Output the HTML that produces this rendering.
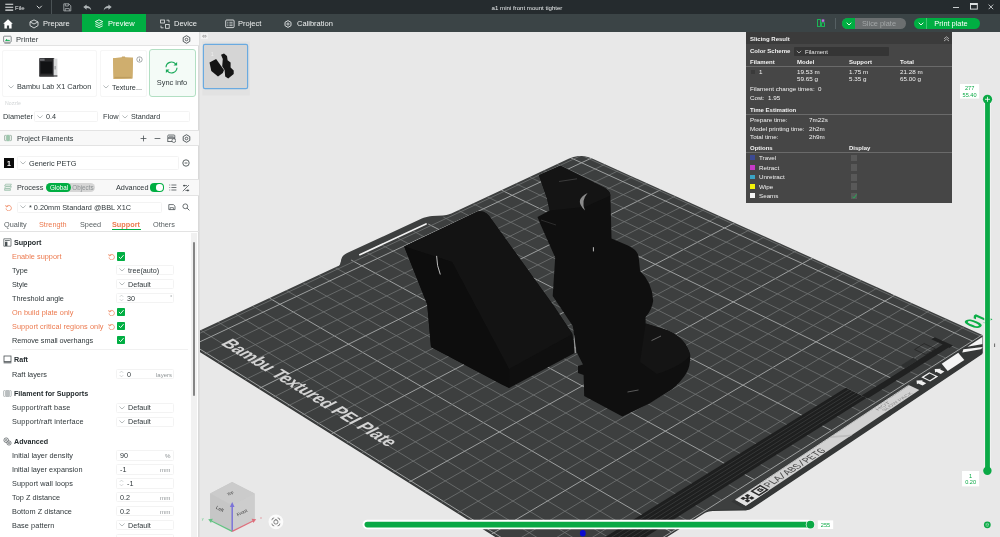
<!DOCTYPE html>
<html><head><meta charset="utf-8"><title>a1 mini front mount tighter</title>
<style>
html,body{margin:0;padding:0;}
body{width:1000px;height:537px;overflow:hidden;position:relative;background:#e8e8e8;font-family:"Liberation Sans",sans-serif;}
.t{position:absolute;white-space:nowrap;will-change:transform;}
.b{position:absolute;box-sizing:border-box;}
#side{position:absolute;left:0;top:32px;width:198px;height:505px;background:#fff;overflow:hidden;}
</style></head><body>

<svg class="b" style="left:0;top:0;will-change:transform" width="1000" height="537" viewBox="0 0 1000 537" font-family="Liberation Sans, sans-serif">
<defs><clipPath id="cp"><path id="plateTop" d="M188.1 335.9L185.8 337.2L184.4 338.5L184.0 339.8L184.6 341.2L186.2 342.5L576.3 586.7L578.5 587.8L580.7 588.3L582.9 588.3L585.1 587.8L587.3 586.6L704.4 512.3L705.8 511.5L707.3 510.9L709.0 510.5L710.8 510.2L712.7 510.1L743.9 509.5L745.8 509.4L747.6 509.1L749.2 508.7L750.7 508.1L752.1 507.3L982.4 353.1L982.4 335.0L592.8 158.7L588.0 156.9L583.1 156.1L578.3 156.1L573.4 157.0L568.6 158.8L451.4 213.4L449.9 214.0L448.3 214.5L446.5 214.9L444.7 215.2L442.8 215.4L432.3 216.1L430.0 216.3L427.7 216.7L425.7 217.2L423.7 217.8L421.8 218.6L347.1 253.1L345.4 254.0L344.0 255.0L342.9 256.0L342.1 257.2L341.6 258.4L340.3 263.7L340.1 264.3L339.7 264.8L339.2 265.4L338.4 265.9L337.6 266.3Z"/></clipPath></defs>
<path d="M188.1 336.9L185.8 338.2L184.4 339.5L184.0 340.8L184.6 342.2L186.2 343.5L576.3 587.7L578.5 588.8L580.7 589.3L582.9 589.3L585.1 588.8L587.3 587.6L704.4 513.3L705.8 512.5L707.3 511.9L709.0 511.5L710.8 511.2L712.7 511.1L743.9 510.5L745.8 510.4L747.6 510.1L749.2 509.7L750.7 509.1L752.1 508.3L982.4 354.1L982.4 336.0L592.8 159.7L588.0 157.9L583.1 157.1L578.3 157.1L573.4 158.0L568.6 159.8L451.4 214.4L449.9 215.0L448.3 215.5L446.5 215.9L444.7 216.2L442.8 216.4L432.3 217.1L430.0 217.3L427.7 217.7L425.7 218.2L423.7 218.8L421.8 219.6L347.1 254.1L345.4 255.0L344.0 256.0L342.9 257.0L342.1 258.2L341.6 259.4L340.3 264.7L340.1 265.3L339.7 265.8L339.2 266.4L338.4 266.9L337.6 267.3Z" fill="#333535"/>
<use href="#plateTop" fill="#3d3f3f"/>
<path d="M359.8 254.7 L426.0 223.9" stroke="#f2f2f2" stroke-width="1.7" stroke-linecap="round"/>
<g clip-path="url(#cp)" fill="none"><path d="M182.8 338.4L582.7 588.4" stroke="#a2a4a4" stroke-width="0.95"/><path d="M579.0 590.7L983.0 334.4" stroke="#a2a4a4" stroke-width="0.95"/><path d="M200.5 330.1L600.9 576.8" stroke="#747777" stroke-width="0.75"/><path d="M560.7 579.3L965.1 326.3" stroke="#747777" stroke-width="0.75"/><path d="M218.0 322.0L618.9 565.4" stroke="#747777" stroke-width="0.75"/><path d="M542.7 568.0L947.4 318.3" stroke="#747777" stroke-width="0.75"/><path d="M235.4 313.9L636.6 554.2" stroke="#747777" stroke-width="0.75"/><path d="M524.9 556.8L929.9 310.4" stroke="#747777" stroke-width="0.75"/><path d="M252.5 305.9L654.1 543.1" stroke="#747777" stroke-width="0.75"/><path d="M507.4 545.8L912.6 302.6" stroke="#747777" stroke-width="0.75"/><path d="M269.4 298.1L671.4 532.1" stroke="#a2a4a4" stroke-width="0.95"/><path d="M490.1 535.0L895.5 294.8" stroke="#a2a4a4" stroke-width="0.95"/><path d="M286.1 290.3L688.4 521.4" stroke="#747777" stroke-width="0.75"/><path d="M473.1 524.3L878.6 287.2" stroke="#747777" stroke-width="0.75"/><path d="M302.7 282.6L705.2 510.7" stroke="#747777" stroke-width="0.75"/><path d="M456.3 513.8L861.9 279.7" stroke="#747777" stroke-width="0.75"/><path d="M319.0 275.0L721.7 500.2" stroke="#747777" stroke-width="0.75"/><path d="M439.8 503.4L845.4 272.2" stroke="#747777" stroke-width="0.75"/><path d="M335.1 267.5L738.0 489.8" stroke="#747777" stroke-width="0.75"/><path d="M423.4 493.2L829.2 264.8" stroke="#747777" stroke-width="0.75"/><path d="M351.1 260.0L754.2 479.6" stroke="#a2a4a4" stroke-width="0.95"/><path d="M407.3 483.1L813.1 257.6" stroke="#a2a4a4" stroke-width="0.95"/><path d="M366.9 252.7L770.1 469.5" stroke="#747777" stroke-width="0.75"/><path d="M391.4 473.1L797.1 250.4" stroke="#747777" stroke-width="0.75"/><path d="M382.5 245.4L785.8 459.6" stroke="#747777" stroke-width="0.75"/><path d="M375.8 463.3L781.4 243.3" stroke="#747777" stroke-width="0.75"/><path d="M398.0 238.2L801.2 449.8" stroke="#747777" stroke-width="0.75"/><path d="M360.3 453.6L765.9 236.2" stroke="#747777" stroke-width="0.75"/><path d="M413.2 231.1L816.5 440.1" stroke="#747777" stroke-width="0.75"/><path d="M345.0 444.0L750.5 229.3" stroke="#747777" stroke-width="0.75"/><path d="M428.3 224.1L831.6 430.5" stroke="#a2a4a4" stroke-width="0.95"/><path d="M330.0 434.6L735.3 222.4" stroke="#a2a4a4" stroke-width="0.95"/><path d="M443.3 217.1L846.5 421.0" stroke="#747777" stroke-width="0.75"/><path d="M315.1 425.3L720.3 215.6" stroke="#747777" stroke-width="0.75"/><path d="M458.1 210.3L861.2 411.7" stroke="#747777" stroke-width="0.75"/><path d="M300.5 416.1L705.4 208.9" stroke="#747777" stroke-width="0.75"/><path d="M472.7 203.5L875.7 402.5" stroke="#747777" stroke-width="0.75"/><path d="M286.0 407.0L690.7 202.2" stroke="#747777" stroke-width="0.75"/><path d="M487.1 196.7L890.1 393.4" stroke="#747777" stroke-width="0.75"/><path d="M271.7 398.0L676.2 195.7" stroke="#747777" stroke-width="0.75"/><path d="M501.4 190.1L904.2 384.4" stroke="#a2a4a4" stroke-width="0.95"/><path d="M257.6 389.2L661.8 189.2" stroke="#a2a4a4" stroke-width="0.95"/><path d="M515.6 183.5L918.2 375.5" stroke="#747777" stroke-width="0.75"/><path d="M243.7 380.4L647.6 182.7" stroke="#747777" stroke-width="0.75"/><path d="M529.6 177.0L932.0 366.8" stroke="#747777" stroke-width="0.75"/><path d="M229.9 371.8L633.5 176.4" stroke="#747777" stroke-width="0.75"/><path d="M543.5 170.5L945.7 358.1" stroke="#747777" stroke-width="0.75"/><path d="M216.3 363.3L619.6 170.1" stroke="#747777" stroke-width="0.75"/><path d="M557.2 164.2L959.2 349.6" stroke="#747777" stroke-width="0.75"/><path d="M202.9 354.9L605.9 163.9" stroke="#747777" stroke-width="0.75"/><path d="M570.7 157.8L972.5 341.1" stroke="#a2a4a4" stroke-width="0.95"/><path d="M189.7 346.6L592.3 157.7" stroke="#a2a4a4" stroke-width="0.95"/><path d="M578.8 154.1L980.4 336.1" stroke="#747777" stroke-width="0.75"/><path d="M181.8 341.7L584.2 154.1" stroke="#747777" stroke-width="0.75"/><path d="M563.6 562.8L584.3 575.6L866.5 397.9L846.0 387.8Z" fill="#1e1f1f" /><path d="M567.0 564.9L849.4 389.5" stroke="#484a4a" stroke-width="0.55"/><path d="M570.5 567.1L852.8 391.1" stroke="#484a4a" stroke-width="0.55"/><path d="M573.9 569.2L856.2 392.8" stroke="#484a4a" stroke-width="0.55"/><path d="M577.4 571.3L859.6 394.5" stroke="#484a4a" stroke-width="0.55"/><path d="M580.8 573.5L863.0 396.2" stroke="#484a4a" stroke-width="0.55"/><path d="M861.6 395.5L867.7 398.5L948.5 347.6L949.3 347.9L953.0 345.6L934.8 337.2L931.3 339.3L942.7 344.6Z" fill="#202121" /><path d="M900.7 365.6L905.5 367.9L918.0 360.1L913.1 357.8Z" fill="#2e3030" /><path d="M914.6 349.5L925.8 354.8L935.3 348.8L924.1 343.6Z" fill="none" stroke="#222323" stroke-width="0.7"/><path d="M731.3 501.6L749.1 511.6L1002.4 341.8L985.0 333.9Z" fill="#353737" /><path d="M735.6 500.1L745.8 505.8L919.3 390.1L909.2 385.2Z" fill="#d2d2d2" /><path d="M735.2 499.9L908.8 385.1" stroke="#f2f2f2" stroke-width="0.7"/><path d="M735.6 500.1L745.8 505.8L768.8 490.5L758.6 484.9Z" fill="#e2e2e2" /><path d="M829.4 438.0L849.9 436.4L852.8 434.4L832.4 436.1Z" fill="#bdbdbd" /><path d="M941.7 363.7L947.7 371.1L964.3 360.1L958.2 352.8Z" fill="#f4f4f4" /><path d="M963.4 349.3L962.3 352.5L980.6 349.2L983.8 347.0Z" fill="#f4f4f4" /><path d="M967.4 346.7L986.7 343.3L989.8 337.5L984.8 335.2Z" fill="#f4f4f4" /></g>
<text transform="matrix(1.4362 0.8859 -1.7864 0.8997 220.36 343.88)" font-size="9.6" font-weight="700" fill="#d4d4d4" textLength="116.5" lengthAdjust="spacingAndGlyphs">Bambu Textured PEI Plate</text>
<text transform="matrix(1.5989 -1.0260 1.8595 1.0134 768.64 487.90)" font-size="5.0" fill="#4a4a4a" font-family="Liberation Mono, monospace" textLength="36" lengthAdjust="spacingAndGlyphs">PLA/ABS/PETG</text>
<text transform="matrix(1.4494 -0.9256 1.8372 0.9120 877.67 410.81)" font-size="2.3" fill="#8c8c8c" textLength="9" lengthAdjust="spacingAndGlyphs">HOT</text>
<text transform="matrix(1.4461 -0.9266 1.8427 0.9131 884.25 411.61)" font-size="2.3" fill="#8c8c8c" textLength="20" lengthAdjust="spacingAndGlyphs">SLOW PACK</text>
<g transform="matrix(1.6283 -1.0463 1.8638 1.0339 748.51 503.00)"><path d="M0 -4.4h1.7v1.6h-1.7zM2.6 -4.4h1.7v1.6h-1.7zM0 -2.1h1.7v1.6h-1.7zM2.6 -2.1h1.7v1.6h-1.7zM1.4 -3h1.5v1.1h-1.5z" fill="#2a2a2a"/><rect x="7" y="-4.4" width="5.2" height="3.9" fill="none" stroke="#2a2a2a" stroke-width="0.8"/><path d="M10.8 -3.2h-1.6v1.5h1.7v-0.8h-0.8" fill="none" stroke="#2a2a2a" stroke-width="0.6"/></g>
<g transform="matrix(1.3987 -0.8961 1.8361 0.8823 921.75 387.34)"><rect x="6.6" y="-4.6" width="5" height="4" fill="none" stroke="#f0f0f0" stroke-width="0.8"/><path d="M1.4 -0.6h2.6v-2.4h0.9l-2.2 -1.9l-2.2 1.9h0.9zM14.4 -0.6h2.6v-2.4h0.9l-2.2 -1.9l-2.2 1.9h0.9z" fill="#f0f0f0"/></g>
<text transform="matrix(1.3095 -0.8252 1.7952 0.8109 976.14 329.62)" font-size="11.5" font-weight="700" fill="#0cae47">01</text>
<path d="M404.2 246.6 L477.5 211.6 Q486 209.5 492.4 220.5 L553.9 306.1 L572.5 334.1 L575.1 352.7 L509.2 388.1 L501.7 384.4 L431 347.1 L427.2 304.3 Z" fill="#0f0f0f"/>
<path d="M404.2 246.6 L477.5 211.6 Q486 209.5 492.4 220.5 L553.9 306.1 L572.5 334.1 L509 369 L452 262 Z" fill="#131313"/>
<path d="M404.2 246.6 L452 262 L509 369 L509.2 388.1 L431 347.1 L427.2 304.3 Z" fill="#0d0d0d"/>
<path d="M436.6 255.9 Q436.8 266 440.3 274.5" fill="none" stroke="#e8e8e8" stroke-width="0.8"/>
<path d="M574.6 335 L575.2 353" stroke="#e0e0e0" stroke-width="0.8"/>
<path d="M538.9 175.2 L560.5 165.8 L601 186 Q610 189.5 610.4 195.5 L611.5 238.6 L627.9 245.4 Q638 250 638.7 257.5 L640.1 271 Q652.5 283 653.2 300.8 Q652 310 645.6 317 L645.6 323.4 L668 330.5 Q686 338.5 690.2 355 Q690.5 366 686.6 372.8 Q681 382 671.7 389.6 L649.4 403.6 L622.4 416.6 L584.2 396.1 L583.6 375 L578 373 L578 366 L583 364.5 L576.6 352 L572.8 326 L552.7 296 L555.2 257.5 L540.2 223.8 L537.5 217.1 L549.7 210.5 L547 198.2 Z" fill="#0f0f0f"/>
<path d="M538.9 175.2 L560.5 165.8 L601 186 Q610 189.5 610.4 195.5 L585 207 L549.7 210.5 L547 198.2 Z" fill="#141414"/>
<path d="M587.6 193 Q573.5 200 585 210.4 Q580.6 201 587.6 193 Z" fill="#8a8a8a"/>
<path d="M559 181.5 L577 178.8" stroke="#555" stroke-width="0.6"/>
<path d="M541 220 L556 225" stroke="#333" stroke-width="0.8"/>
<path d="M593.4 247.2 V251.4" stroke="#e8e8e8" stroke-width="0.8"/>
<path d="M645.6 323.4 L668 330.5 Q686 338.5 690.2 355 Q682 366 657 374 L640 362 Z" fill="#141414"/>
<path d="M651.5 340.6 L661 336" stroke="#8a8a8a" stroke-width="0.7"/><path d="M627.5 392 L638.5 390" stroke="#7a7a7a" stroke-width="0.7"/>
<ellipse cx="582.8" cy="533.2" rx="2.9" ry="3.3" fill="#0b0bd0"/>
<rect x="362.5" y="519.8" width="451" height="9.4" rx="4.7" fill="#ffffff"/>
<rect x="364.5" y="521.8" width="447" height="5.6" rx="2.8" fill="#0aa945"/>
<circle cx="810.4" cy="524.6" r="4.6" fill="#fff"/><circle cx="810.4" cy="524.6" r="3.9" fill="#0aa945"/>
<rect x="817.8" y="520.4" width="15.4" height="8.6" fill="#fff"/>
<text x="825.5" y="526.8" font-size="5.6" fill="#0aa945" text-anchor="middle">255</text>
<rect x="984.3" y="99" width="6.4" height="372" fill="#f6f6f6"/><rect x="985.1" y="99" width="4.8" height="372" fill="#0aa945"/>
<circle cx="987.5" cy="99.3" r="4.6" fill="#0aa945"/><path d="M985 99.3H990M987.5 96.8V101.8" stroke="#fff" stroke-width="0.8"/>
<circle cx="987.4" cy="470.8" r="4.2" fill="#0aa945"/>
<rect x="960" y="84" width="19.2" height="14.6" fill="#fff"/>
<text x="969.6" y="90.4" font-size="5.6" fill="#0aa945" text-anchor="middle">277</text><text x="969.6" y="96.7" font-size="5.6" fill="#0aa945" text-anchor="middle">55.40</text>
<rect x="962" y="471" width="17.2" height="15.4" fill="#fff"/>
<text x="970.6" y="477.8" font-size="5.6" fill="#0aa945" text-anchor="middle">1</text><text x="970.6" y="484.3" font-size="5.6" fill="#0aa945" text-anchor="middle">0.20</text>
<circle cx="987.3" cy="524.8" r="3.4" fill="#0aa945"/><path d="M985.6 524.2l1.7 -0.9l1.7 0.9l-1.7 0.9zM985.6 525.6l1.7 0.9l1.7 -0.9" fill="none" stroke="#d8f3e2" stroke-width="0.5"/>
<path d="M994.6 343.5v3.5" stroke="#444" stroke-width="0.8"/>
<g><path d="M232.1 481.9 L254.6 493.5 L254.6 519.5 L232.1 531.6 L210.1 519.5 L210.1 493.5 Z" fill="#c9c9c9"/><path d="M232.1 481.9 L254.6 493.5 L232.1 505.5 L210.1 493.5 Z" fill="#cbcbcb"/><path d="M232.1 505.5 L254.6 493.5 L254.6 519.5 L232.1 531.6 Z" fill="#cdcdcd"/><path d="M210.1 493.5 L232.1 505.5 L232.1 531.6 L210.1 519.5 Z" fill="#c6c6c6"/><path d="M232.2 506 V531.2" stroke="#7b73d8" stroke-width="1.5"/><path d="M229.9 507 L232.2 502 L234.5 507 Z" fill="#7b73d8"/><path d="M232.2 531.4 L211.5 521" stroke="#63c383" stroke-width="1.2"/><path d="M212.8 518.8 L208.2 519.3 L211 523 Z" fill="#63c383"/><path d="M232.2 531.4 L253 521" stroke="#de6f7c" stroke-width="1.2"/><path d="M251.6 518.8 L256.2 519.3 L253.4 523 Z" fill="#de6f7c"/><text transform="translate(228 496) rotate(-27)" font-size="4" fill="#333">Top</text><text transform="translate(215.6 508.6) rotate(27)" font-size="4.7" fill="#333">Left</text><text transform="translate(237.8 516.6) rotate(-27)" font-size="4.7" fill="#333">Front</text><text x="201.8" y="519.6" font-size="3.8" fill="#7ccf98">y</text><text x="260" y="518.6" font-size="3.8" fill="#e08a94">x</text></g>
<circle cx="275.9" cy="521.8" r="7.4" fill="#fbfbfb"/><circle cx="275.9" cy="522" r="2.1" fill="none" stroke="#555" stroke-width="0.7"/><path d="M274.9 520.2 l1 -0.9 l1 0.9" fill="none" stroke="#555" stroke-width="0.6"/><path d="M271.9 520.2 Q271.9 517.9 274.2 517.9 M277.6 517.9 Q279.9 517.9 279.9 520.2 M279.9 523.6 Q279.9 525.9 277.6 525.9 M274.2 525.9 Q271.9 525.9 271.9 523.6" fill="none" stroke="#555" stroke-width="0.7"/>
<rect x="202.4" y="41.6" width="47.4" height="53.8" fill="#e2e2e2"/>
<rect x="203.4" y="44.3" width="44.2" height="44.3" rx="1.6" fill="#d5d5d5" stroke="#6aaae0" stroke-width="1.2"/>
<path d="M209.5 62.6L216.1 59L224 69.9L222.8 72.9L218 76.5L211.3 71.1Z" fill="#151515"/>
<path d="M221 54.8L224 53.6L227 56L227.6 60.2L230.6 62.6L230.6 67.5L233.7 70.5L233.7 74.1L228.2 78.4L225.2 76.6L224.6 69.9L222.2 66.3L222.8 59Z" fill="#151515"/>
<text x="211" y="55.6" font-size="4.6" fill="#efefef">1</text>
<rect x="201" y="33.4" width="6.8" height="5.6" fill="#f3f3f3"/>
<path d="M202.3 36.2l1.5 -1.2v2.4zM206.5 36.2l-1.5 -1.2v2.4z" fill="none" stroke="#666" stroke-width="0.4"/>
</svg>
<div class="b" style="left:0.00px;top:0.00px;width:1000.00px;height:14.40px;background:#252b2e;"></div>
<div class="b" style="left:0.00px;top:14.40px;width:1000.00px;height:17.60px;background:#3b4446;"></div>
<svg class="b" style="left:5.00px;top:2.80px;" width="9" height="9" viewBox="0 0 9 9"><path d="M0.3 1.3H8.2M0.3 4.2H8.2M0.3 7.1H8.2" stroke="#e6e9ea" stroke-width="1.1"/></svg>
<div class="t" style="top:1.80px;height:12px;line-height:12px;font-size:6.0px;color:#e6e9ea;font-weight:400;left:14.80px;">File</div>
<svg class="b" style="left:35.50px;top:5.20px;" width="7" height="5" viewBox="0 0 7 5"><path d="M0.8 0.8L3.3 3.3L5.8 0.8" fill="none" stroke="#e6e9ea" stroke-width="0.9"/></svg>
<div class="b" style="left:51.30px;top:0.00px;width:0.60px;height:13.50px;background:#4a5255;"></div>
<svg class="b" style="left:63.00px;top:3.00px;" width="9" height="9" viewBox="0 0 9 9"><path d="M0.8 0.8H5.8L7.8 2.8V7.9H0.8Z M2.3 0.8V3H5.3V0.8 M2.2 7.9V5.6H6.3V7.9" fill="none" stroke="#aeb4b6" stroke-width="0.8"/></svg>
<svg class="b" style="left:83.00px;top:3.50px;" width="9" height="7" viewBox="0 0 9 7"><path d="M3.6 0.4L0.3 3.1L3.6 5.8V4.1C5.6 4 7 4.6 8.3 6.4C8 3.7 6.4 2.2 3.6 2.1Z" fill="#aeb4b6"/></svg>
<svg class="b" style="left:103.00px;top:3.50px;" width="9" height="7" viewBox="0 0 9 7"><path d="M5.4 0.4L8.7 3.1L5.4 5.8V4.1C3.4 4 2 4.6 0.7 6.4C1 3.7 2.6 2.2 5.4 2.1Z" fill="#aeb4b6"/></svg>
<div class="t" style="top:1.50px;height:12px;line-height:12px;font-size:6.1px;color:#e8ebec;font-weight:400;left:477.30px;width:100px;text-align:center;">a1 mini front mount tighter</div>
<div class="b" style="left:952.60px;top:6.80px;width:6.40px;height:0.80px;background:#c9cdce;"></div>
<svg class="b" style="left:969.50px;top:3.20px;" width="8" height="7" viewBox="0 0 8 7"><rect x="0.5" y="0.5" width="6.8" height="5.6" fill="none" stroke="#e6e9ea" stroke-width="0.9"/><path d="M0.5 1.3H7.3" stroke="#e6e9ea" stroke-width="1.3"/></svg>
<svg class="b" style="left:987.50px;top:4.20px;" width="6" height="6" viewBox="0 0 6 6"><path d="M0.6 0.6L5.2 5.2M5.2 0.6L0.6 5.2" stroke="#e6e9ea" stroke-width="0.8"/></svg>
<div class="b" style="left:82.00px;top:14.40px;width:64.30px;height:17.60px;background:#00ae42;"></div>
<svg class="b" style="left:2.80px;top:18.60px;" width="10" height="10" viewBox="0 0 10 10"><path d="M5 0.3L0.2 4.8H1.4V9.6H3.9V6.4H6.1V9.6H8.6V4.8H9.8Z" fill="#fff"/></svg>
<svg class="b" style="left:29.30px;top:18.60px;" width="10" height="10" viewBox="0 0 10 10"><path d="M5 0.9L9 2.9V6.6L5 9L1 6.6V2.9Z M1.2 3L5 5L8.8 3" fill="none" stroke="#e8ebec" stroke-width="0.85" stroke-linejoin="round"/></svg>
<div class="t" style="top:18.40px;height:12px;line-height:12px;font-size:7.5px;color:#eef0f0;font-weight:400;left:43.40px;">Prepare</div>
<svg class="b" style="left:94.00px;top:18.70px;" width="10" height="10" viewBox="0 0 10 10"><path d="M5 0.8L8.7 2.6L5 4.4L1.3 2.6Z M1.3 4.7L5 6.5L8.7 4.7 M1.3 6.8L5 8.6L8.7 6.8" fill="none" stroke="#fff" stroke-width="0.85" stroke-linejoin="round"/></svg>
<div class="t" style="top:18.40px;height:12px;line-height:12px;font-size:7.5px;color:#ffffff;font-weight:400;left:107.60px;">Preview</div>
<svg class="b" style="left:160.00px;top:18.70px;" width="10" height="10" viewBox="0 0 10 10"><rect x="0.6" y="1" width="3.8" height="3" fill="none" stroke="#e8ebec" stroke-width="0.8"/><rect x="5.6" y="5.5" width="3.6" height="3.8" fill="none" stroke="#e8ebec" stroke-width="0.8"/><path d="M6.5 1.2H9V3.4 M3.5 8.8H1V6.6" fill="none" stroke="#e8ebec" stroke-width="0.8"/></svg>
<div class="t" style="top:18.40px;height:12px;line-height:12px;font-size:7.5px;color:#eef0f0;font-weight:400;left:174.20px;">Device</div>
<svg class="b" style="left:224.50px;top:18.80px;" width="10" height="10" viewBox="0 0 10 10"><rect x="0.7" y="1" width="8.4" height="7.6" rx="1" fill="none" stroke="#e8ebec" stroke-width="0.85"/><path d="M2.3 3.3H3.3M4.4 3.3H7.6M2.3 5H3.3M4.4 5H7.6M2.3 6.6H3.3M4.4 6.6H7.6" stroke="#e8ebec" stroke-width="0.7"/></svg>
<div class="t" style="top:18.40px;height:12px;line-height:12px;font-size:7.5px;color:#eef0f0;font-weight:400;left:238.00px;">Project</div>
<svg class="b" style="left:283.80px;top:19.60px;" width="8" height="8" viewBox="0 0 8 8"><path d="M4 0.6L7 2.3V5.7L4 7.4L1 5.7V2.3Z" fill="none" stroke="#e8ebec" stroke-width="0.9" stroke-linejoin="round"/><circle cx="4" cy="4" r="1.1" fill="none" stroke="#e8ebec" stroke-width="0.8"/></svg>
<div class="t" style="top:18.40px;height:12px;line-height:12px;font-size:7.5px;color:#eef0f0;font-weight:400;left:296.80px;">Calibration</div>
<svg class="b" style="left:816.50px;top:19.30px;" width="8" height="8" viewBox="0 0 8 8"><rect x="0.5" y="0.6" width="3" height="6.8" fill="none" stroke="#19c45a" stroke-width="0.9"/><rect x="4.6" y="3.8" width="2.9" height="3.6" fill="none" stroke="#19c45a" stroke-width="0.9"/><rect x="4.7" y="0.4" width="2.6" height="2.4" fill="#c06be0"/></svg>
<div class="b" style="left:835.00px;top:17.50px;width:0.60px;height:11.00px;background:#566063;"></div>
<div class="b" style="left:841.70px;top:17.70px;width:64.80px;height:11.60px;background:#6b6f70;border-radius:6px;"></div>
<div class="b" style="left:841.70px;top:17.70px;width:13.00px;height:11.60px;background:#00ae42;border-radius:6px 0 0 6px;"></div>
<svg class="b" style="left:845.50px;top:21.50px;" width="6" height="4" viewBox="0 0 6 4"><path d="M0.7 0.7L3 3L5.3 0.7" fill="none" stroke="#fff" stroke-width="0.9"/></svg>
<div class="t" style="top:18.10px;height:12px;line-height:12px;font-size:7.4px;color:#a3a7a8;font-weight:400;left:828.50px;width:100px;text-align:center;">Slice plate</div>
<div class="b" style="left:914.00px;top:17.70px;width:65.50px;height:11.60px;background:#00ae42;border-radius:6px;"></div>
<div class="b" style="left:926.00px;top:17.70px;width:0.60px;height:11.60px;background:#3fc572;"></div>
<svg class="b" style="left:917.50px;top:21.50px;" width="6" height="4" viewBox="0 0 6 4"><path d="M0.7 0.7L3 3L5.3 0.7" fill="none" stroke="#fff" stroke-width="0.9"/></svg>
<div class="t" style="top:18.10px;height:12px;line-height:12px;font-size:7.4px;color:#ffffff;font-weight:400;left:901.00px;width:100px;text-align:center;">Print plate</div>
<div class="b" style="left:0.00px;top:32.00px;width:198.30px;height:505.00px;background:#ffffff;"></div>
<div class="b" style="left:198.30px;top:32.00px;width:2.20px;height:505.00px;background:linear-gradient(90deg,#d6d6d6,#e2e2e2);"></div>
<div class="b" style="left:0.00px;top:32.00px;width:198.60px;height:14.40px;background:#f8f8f8;border-bottom:0.8px solid #e3e3e3;"></div>
<svg class="b" style="left:3.00px;top:35.00px;" width="9" height="9" viewBox="0 0 9 9"><rect x="0.6" y="1.2" width="7.6" height="6" rx="0.8" fill="none" stroke="#6b7275" stroke-width="0.8"/><path d="M2 6l1.6 -2.2l1.4 1.6l0.9 -0.9l1.2 1.5z" fill="#19b257"/><path d="M1.4 8.3H7.4" stroke="#6b7275" stroke-width="0.7"/></svg>
<div class="t" style="top:34.30px;height:12px;line-height:12px;font-size:7.6px;color:#2f373a;font-weight:400;left:16.20px;">Printer</div>
<svg class="b" style="left:182.30px;top:35.00px;" width="9" height="9" viewBox="0 0 9 9"><path d="M4.5 0.7L7.8 2.6V6.4L4.5 8.3L1.2 6.4V2.6Z" fill="none" stroke="#4d5457" stroke-width="0.95" stroke-linejoin="round"/><circle cx="4.5" cy="4.5" r="1.3" fill="none" stroke="#4d5457" stroke-width="0.9"/></svg>
<div class="b" style="left:2.00px;top:49.60px;width:95.00px;height:47.60px;background:#fff;border:0.6px solid #f6f6f6;border-radius:2px;"></div>
<div class="b" style="left:99.60px;top:49.60px;width:47.60px;height:47.60px;background:#fff;border:0.6px solid #f6f6f6;border-radius:2px;"></div>
<svg class="b" style="left:37.50px;top:56.50px;" width="21" height="21" viewBox="0 0 21 21"><rect x="1.2" y="1" width="15.2" height="18.4" rx="0.8" fill="#2b2b2d"/><rect x="15.6" y="1.6" width="3.8" height="17.6" fill="#d9dadb"/><rect x="2.6" y="4.6" width="11.6" height="12" fill="#111214"/><rect x="2" y="1.6" width="4.6" height="2.2" fill="#6a6c70"/><rect x="16.6" y="9" width="1" height="3.4" fill="#8d8f92"/><rect x="1.2" y="18.4" width="18.2" height="1.2" fill="#3c3c3e"/></svg>
<svg class="b" style="left:8.30px;top:84.60px;" width="6" height="4" viewBox="0 0 6 4"><path d="M0.7 0.8 L3 3 L5.3 0.8" fill="none" stroke="#a3a9ab" stroke-width="0.8" stroke-linecap="round"/></svg>
<div class="t" style="top:81.10px;height:12px;line-height:12px;font-size:7.3px;color:#2f373a;font-weight:400;left:17.40px;">Bambu Lab X1 Carbon</div>
<svg class="b" style="left:112.20px;top:56.20px;" width="22" height="24" viewBox="0 0 22 24"><path d="M1 2.2L9.8 1.2L10 0.4H13L13.2 1.2L21 1.8L20.4 22.6L1.6 23Z" fill="#c9a869"/><path d="M1 2.2L21 1.8L20.4 22.6L1.6 23Z" fill="#cfae6e"/><path d="M2.4 21.4H19.4" stroke="#b8975a" stroke-width="0.8"/></svg>
<svg class="b" style="left:135.60px;top:56.20px;" width="7" height="7" viewBox="0 0 7 7"><circle cx="3.5" cy="3.5" r="2.7" fill="none" stroke="#6b7275" stroke-width="0.6"/><path d="M3.5 3.1V5.1" stroke="#6b7275" stroke-width="0.7"/><circle cx="3.5" cy="2" r="0.4" fill="#6b7275"/></svg>
<svg class="b" style="left:103.20px;top:85.40px;" width="6" height="4" viewBox="0 0 6 4"><path d="M0.7 0.8 L3 3 L5.3 0.8" fill="none" stroke="#a3a9ab" stroke-width="0.8" stroke-linecap="round"/></svg>
<div class="t" style="top:82.00px;height:12px;line-height:12px;font-size:7.3px;color:#2f373a;font-weight:400;left:111.80px;">Texture...</div>
<div class="b" style="left:149.20px;top:49.40px;width:47.00px;height:48.00px;background:#f4fbf7;border:0.9px solid #b2dfc3;border-radius:3px;"></div>
<svg class="b" style="left:164.40px;top:59.60px;" width="15" height="15" viewBox="0 0 15 15"><path d="M2 7.2A5.5 5.5 0 0 1 11.6 3.9" fill="none" stroke="#19a95a" stroke-width="1.15"/><path d="M13.1 2V5.6H9.5Z" fill="#19a95a"/><path d="M13 7.8A5.5 5.5 0 0 1 3.4 11.1" fill="none" stroke="#19a95a" stroke-width="1.15"/><path d="M1.9 13V9.4H5.5Z" fill="#19a95a"/></svg>
<div class="t" style="top:76.80px;height:12px;line-height:12px;font-size:7.4px;color:#2f373a;font-weight:400;left:122.40px;width:100px;text-align:center;">Sync info</div>
<div class="t" style="top:97.20px;height:12px;line-height:12px;font-size:5.2px;color:#d2d5d6;font-weight:400;left:4.60px;">Nozzle</div>
<div class="t" style="top:111.10px;height:12px;line-height:12px;font-size:7.4px;color:#2f373a;font-weight:400;left:3.00px;">Diameter</div>
<div class="b" style="left:34.40px;top:110.60px;width:63.80px;height:11.60px;background:#fff;border:0.6px solid #f3f3f3;border-radius:1.5px;"></div>
<svg class="b" style="left:37.20px;top:114.60px;" width="6" height="4" viewBox="0 0 6 4"><path d="M0.7 0.8 L3 3 L5.3 0.8" fill="none" stroke="#a3a9ab" stroke-width="0.8" stroke-linecap="round"/></svg>
<div class="t" style="top:111.10px;height:12px;line-height:12px;font-size:7.2px;color:#2f373a;font-weight:400;left:45.80px;">0.4</div>
<div class="t" style="top:111.10px;height:12px;line-height:12px;font-size:7.4px;color:#2f373a;font-weight:400;left:102.60px;">Flow</div>
<div class="b" style="left:119.40px;top:110.60px;width:70.80px;height:11.60px;background:#fff;border:0.6px solid #f3f3f3;border-radius:1.5px;"></div>
<svg class="b" style="left:121.60px;top:114.60px;" width="6" height="4" viewBox="0 0 6 4"><path d="M0.7 0.8 L3 3 L5.3 0.8" fill="none" stroke="#a3a9ab" stroke-width="0.8" stroke-linecap="round"/></svg>
<div class="t" style="top:111.10px;height:12px;line-height:12px;font-size:7.2px;color:#2f373a;font-weight:400;left:130.60px;">Standard</div>
<div class="b" style="left:0.00px;top:130.20px;width:198.60px;height:16.20px;background:#f8f8f8;border-top:0.8px solid #e3e3e3;border-bottom:0.8px solid #e3e3e3;"></div>
<svg class="b" style="left:4.00px;top:134.30px;" width="8" height="8" viewBox="0 0 8 8"><rect x="0.5" y="1.4" width="1.8" height="5.2" rx="0.6" fill="none" stroke="#8aa595" stroke-width="0.7"/><rect x="5.7" y="1.4" width="1.8" height="5.2" rx="0.6" fill="none" stroke="#8aa595" stroke-width="0.7"/><rect x="2.4" y="0.8" width="3.2" height="6.4" fill="#9dc7ad"/></svg>
<div class="t" style="top:133.00px;height:12px;line-height:12px;font-size:7.3px;color:#2f373a;font-weight:400;left:17.00px;">Project Filaments</div>
<svg class="b" style="left:140.00px;top:135.00px;" width="7" height="7" viewBox="0 0 7 7"><path d="M3.5 0.6V6.4M0.6 3.5H6.4" stroke="#4a5154" stroke-width="0.8"/></svg>
<svg class="b" style="left:154.00px;top:135.00px;" width="7" height="7" viewBox="0 0 7 7"><path d="M0.6 3.5H6.4" stroke="#4a5154" stroke-width="0.8"/></svg>
<svg class="b" style="left:167.40px;top:134.00px;" width="9" height="9" viewBox="0 0 9 9"><rect x="0.8" y="1" width="7" height="3" rx="0.8" fill="none" stroke="#4a5154" stroke-width="0.8"/><rect x="0.8" y="4" width="7" height="3.6" fill="none" stroke="#4a5154" stroke-width="0.8"/><circle cx="6.8" cy="6.6" r="1.9" fill="#f8f8f8" stroke="#4a5154" stroke-width="0.7"/><path d="M2 2.4H6.6" stroke="#4a5154" stroke-width="0.6"/></svg>
<svg class="b" style="left:181.50px;top:133.90px;" width="9" height="9" viewBox="0 0 9 9"><path d="M4.5 0.7L7.8 2.6V6.4L4.5 8.3L1.2 6.4V2.6Z" fill="none" stroke="#4d5457" stroke-width="0.95" stroke-linejoin="round"/><circle cx="4.5" cy="4.5" r="1.3" fill="none" stroke="#4d5457" stroke-width="0.9"/></svg>
<div class="b" style="left:3.80px;top:157.80px;width:10.20px;height:10.20px;background:#0b0b0b;"></div>
<div class="t" style="top:157.60px;height:12px;line-height:12px;font-size:7px;color:#ffffff;font-weight:700;left:-41.10px;width:100px;text-align:center;">1</div>
<div class="b" style="left:17.00px;top:155.80px;width:162.00px;height:14.60px;background:#fff;border:0.6px solid #f3f3f3;border-radius:1.5px;"></div>
<svg class="b" style="left:19.80px;top:161.30px;" width="6" height="4" viewBox="0 0 6 4"><path d="M0.7 0.8 L3 3 L5.3 0.8" fill="none" stroke="#a3a9ab" stroke-width="0.8" stroke-linecap="round"/></svg>
<div class="t" style="top:157.80px;height:12px;line-height:12px;font-size:7.3px;color:#2f373a;font-weight:400;left:28.80px;">Generic PETG</div>
<svg class="b" style="left:182.00px;top:159.00px;" width="8" height="8" viewBox="0 0 8 8"><circle cx="4" cy="4" r="3.2" fill="none" stroke="#4a5154" stroke-width="0.9"/><path d="M2.6 4H5.4" stroke="#4a5154" stroke-width="0.9"/></svg>
<div class="b" style="left:0.00px;top:179.00px;width:198.60px;height:16.60px;background:#f8f8f8;border-top:0.8px solid #e3e3e3;border-bottom:0.8px solid #e3e3e3;"></div>
<svg class="b" style="left:4.00px;top:183.40px;" width="8" height="8" viewBox="0 0 8 8"><path d="M1.6 1.2H7.4L6.4 3H0.6ZM1.6 3.6H7.4L6.4 5.4H0.6ZM0.6 6H6.4V7.4H0.6Z" fill="none" stroke="#7fae93" stroke-width="0.6"/></svg>
<div class="t" style="top:182.00px;height:12px;line-height:12px;font-size:7.3px;color:#2f373a;font-weight:400;left:17.00px;">Process</div>
<div class="b" style="left:46.00px;top:182.80px;width:49.00px;height:9.40px;background:#d6d6d6;border-radius:4.7px;"></div>
<div class="b" style="left:46.00px;top:182.80px;width:25.20px;height:9.40px;background:#00ae42;border-radius:4.7px;"></div>
<div class="t" style="top:182.10px;height:12px;line-height:12px;font-size:6.3px;color:#ffffff;font-weight:400;left:8.60px;width:100px;text-align:center;">Global</div>
<div class="t" style="top:182.10px;height:12px;line-height:12px;font-size:6.3px;color:#8d9294;font-weight:400;left:33.00px;width:100px;text-align:center;">Objects</div>
<div class="t" style="top:182.00px;height:12px;line-height:12px;font-size:7.3px;color:#2f373a;font-weight:400;left:116.20px;">Advanced</div>
<div class="b" style="left:150.00px;top:183.40px;width:13.60px;height:8.20px;background:#00ae42;border-radius:4.1px;"></div>
<div class="b" style="left:156.40px;top:184.30px;width:6.40px;height:6.40px;background:#fff;border-radius:3.2px;"></div>
<svg class="b" style="left:168.50px;top:184.00px;" width="8" height="7" viewBox="0 0 8 7"><path d="M2.4 1H7.4M2.4 3.5H7.4M2.4 6H7.4" stroke="#4a5154" stroke-width="0.8"/><path d="M0.4 1H1.2M0.4 3.5H1.2M0.4 6H1.2" stroke="#4a5154" stroke-width="0.8"/></svg>
<svg class="b" style="left:182.40px;top:183.60px;" width="8" height="8" viewBox="0 0 8 8"><path d="M0.8 7.2L7 1M1 1.6H5M3.4 6.4H7.2" stroke="#4a5154" stroke-width="0.8" fill="none"/><circle cx="2.2" cy="1.6" r="0.9" fill="#4a5154"/><circle cx="5.8" cy="6.4" r="0.9" fill="#4a5154"/></svg>
<svg class="b" style="left:4.50px;top:203.80px;" width="7" height="7" viewBox="0 0 7 7"><path d="M1.6 2.4A2.7 2.7 0 1 1 1 4.4" fill="none" stroke="#ec7a4f" stroke-width="0.7"/><path d="M0.6 1L1.4 3L3.3 2.2" fill="none" stroke="#ec7a4f" stroke-width="0.7"/></svg>
<div class="b" style="left:17.00px;top:201.60px;width:145.20px;height:11.00px;background:#fff;border:0.6px solid #f3f3f3;border-radius:1.5px;"></div>
<svg class="b" style="left:19.80px;top:205.30px;" width="6" height="4" viewBox="0 0 6 4"><path d="M0.7 0.8 L3 3 L5.3 0.8" fill="none" stroke="#a3a9ab" stroke-width="0.8" stroke-linecap="round"/></svg>
<div class="t" style="top:201.80px;height:12px;line-height:12px;font-size:7.3px;color:#2f373a;font-weight:400;left:28.80px;">* 0.20mm Standard @BBL X1C</div>
<svg class="b" style="left:168.00px;top:203.30px;" width="8" height="8" viewBox="0 0 8 8"><path d="M0.8 1.6H5.4L7 3.2V6.6H0.8Z" fill="none" stroke="#4a5154" stroke-width="0.8"/><path d="M2.2 6.6V4.6H5.4V6.6" fill="none" stroke="#4a5154" stroke-width="0.7"/></svg>
<svg class="b" style="left:182.20px;top:203.20px;" width="8" height="8" viewBox="0 0 8 8"><circle cx="3.3" cy="3.3" r="2.4" fill="none" stroke="#4a5154" stroke-width="0.8"/><path d="M5.1 5.1L7.4 7.4" stroke="#4a5154" stroke-width="0.9"/></svg>
<div class="t" style="top:218.90px;height:12px;line-height:12px;font-size:7.3px;color:#596063;font-weight:400;left:4.40px;">Quality</div>
<div class="t" style="top:218.90px;height:12px;line-height:12px;font-size:7.3px;color:#ec7a4f;font-weight:400;left:39.00px;">Strength</div>
<div class="t" style="top:218.90px;height:12px;line-height:12px;font-size:7.3px;color:#596063;font-weight:400;left:79.60px;">Speed</div>
<div class="t" style="top:218.90px;height:12px;line-height:12px;font-size:7.3px;color:#ec7a4f;font-weight:700;left:112.20px;">Support</div>
<div class="t" style="top:218.90px;height:12px;line-height:12px;font-size:7.3px;color:#596063;font-weight:400;left:152.60px;">Others</div>
<div class="b" style="left:112.40px;top:229.00px;width:28.60px;height:1.10px;background:#00ae42;"></div>
<div class="b" style="left:0.00px;top:230.60px;width:198.60px;height:0.70px;background:#e3e3e3;"></div>
<div class="b" style="left:190.50px;top:233.20px;width:6.50px;height:304.00px;background:#f1f1f1;"></div>
<div class="b" style="left:193.00px;top:241.80px;width:2.00px;height:154.70px;background:#858585;border-radius:1px;"></div>
<svg class="b" style="left:3.00px;top:238.10px;" width="9" height="9" viewBox="0 0 9 9"><path d="M0.8 0.8H8V8.2H0.8Z" fill="none" stroke="#4a5154" stroke-width="0.7"/><path d="M2 3.8H4.4V8H2ZM2 2.2H6.8V3H2Z" fill="#4a5154"/></svg><div class="t" style="top:236.90px;height:12px;line-height:12px;font-size:7.15px;color:#242b2e;font-weight:700;left:13.80px;">Support</div>
<div class="t" style="top:251.00px;height:12px;line-height:12px;font-size:7.3px;color:#ec7a4f;font-weight:400;letter-spacing:0.035px;left:12.00px;">Enable support</div>
<svg class="b" style="left:108.10px;top:253.10px;" width="7" height="7" viewBox="0 0 7 7"><path d="M1.6 2.4A2.7 2.7 0 1 1 1 4.4" fill="none" stroke="#ec7a4f" stroke-width="0.7"/><path d="M0.6 1L1.4 3L3.3 2.2" fill="none" stroke="#ec7a4f" stroke-width="0.7"/></svg>
<div class="b" style="left:117.00px;top:252.40px;width:8.20px;height:8.20px;background:#00ae42;border-radius:0.8px;"></div><svg class="b" style="left:118.00px;top:253.60px;" width="6.4" height="6" viewBox="0 0 6.4 6"><path d="M0.9 2.9L2.6 4.6L5.6 1.1" fill="none" stroke="#fff" stroke-width="0.9"/></svg>
<div class="t" style="top:264.90px;height:12px;line-height:12px;font-size:7.3px;color:#2f373a;font-weight:400;letter-spacing:-0.031px;left:12.00px;">Type</div>
<div class="b" style="left:116.20px;top:265.10px;width:57.40px;height:10.40px;background:#fff;border:0.6px solid #f3f3f3;border-radius:1.5px;"></div><svg class="b" style="left:119.40px;top:268.40px;" width="6" height="4" viewBox="0 0 6 4"><path d="M0.7 0.8 L3 3 L5.3 0.8" fill="none" stroke="#a3a9ab" stroke-width="0.8" stroke-linecap="round"/></svg><div class="t" style="top:264.90px;height:12px;line-height:12px;font-size:7.2px;color:#2f373a;font-weight:400;left:128.20px;">tree(auto)</div>
<div class="t" style="top:278.80px;height:12px;line-height:12px;font-size:7.3px;color:#2f373a;font-weight:400;letter-spacing:-0.106px;left:12.00px;">Style</div>
<div class="b" style="left:116.20px;top:279.00px;width:57.40px;height:10.40px;background:#fff;border:0.6px solid #f3f3f3;border-radius:1.5px;"></div><svg class="b" style="left:119.40px;top:282.30px;" width="6" height="4" viewBox="0 0 6 4"><path d="M0.7 0.8 L3 3 L5.3 0.8" fill="none" stroke="#a3a9ab" stroke-width="0.8" stroke-linecap="round"/></svg><div class="t" style="top:278.80px;height:12px;line-height:12px;font-size:7.2px;color:#2f373a;font-weight:400;left:128.20px;">Default</div>
<div class="t" style="top:292.70px;height:12px;line-height:12px;font-size:7.3px;color:#2f373a;font-weight:400;letter-spacing:-0.030px;left:12.00px;">Threshold angle</div>
<div class="b" style="left:116.20px;top:292.90px;width:57.40px;height:10.40px;background:#fff;border:0.6px solid #f3f3f3;border-radius:1.5px;"></div><svg class="b" style="left:118.60px;top:294.10px;" width="5" height="8" viewBox="0 0 5 8"><path d="M0.8 2.8L2.5 1.1L4.2 2.8M0.8 5.2L2.5 6.9L4.2 5.2" fill="none" stroke="#b4b8ba" stroke-width="0.6"/></svg><div class="t" style="top:292.70px;height:12px;line-height:12px;font-size:7.2px;color:#2f373a;font-weight:400;left:127.00px;">30</div>
<div class="t" style="top:291.20px;height:12px;line-height:12px;font-size:6px;color:#9a9fa1;font-weight:400;left:169.60px;">°</div>
<div class="t" style="top:306.60px;height:12px;line-height:12px;font-size:7.3px;color:#ec7a4f;font-weight:400;letter-spacing:0.049px;left:12.00px;">On build plate only</div>
<svg class="b" style="left:108.10px;top:308.70px;" width="7" height="7" viewBox="0 0 7 7"><path d="M1.6 2.4A2.7 2.7 0 1 1 1 4.4" fill="none" stroke="#ec7a4f" stroke-width="0.7"/><path d="M0.6 1L1.4 3L3.3 2.2" fill="none" stroke="#ec7a4f" stroke-width="0.7"/></svg>
<div class="b" style="left:117.00px;top:308.00px;width:8.20px;height:8.20px;background:#00ae42;border-radius:0.8px;"></div><svg class="b" style="left:118.00px;top:309.20px;" width="6.4" height="6" viewBox="0 0 6.4 6"><path d="M0.9 2.9L2.6 4.6L5.6 1.1" fill="none" stroke="#fff" stroke-width="0.9"/></svg>
<div class="t" style="top:320.50px;height:12px;line-height:12px;font-size:7.3px;color:#ec7a4f;font-weight:400;letter-spacing:0.067px;left:12.00px;">Support critical regions only</div>
<svg class="b" style="left:108.10px;top:322.60px;" width="7" height="7" viewBox="0 0 7 7"><path d="M1.6 2.4A2.7 2.7 0 1 1 1 4.4" fill="none" stroke="#ec7a4f" stroke-width="0.7"/><path d="M0.6 1L1.4 3L3.3 2.2" fill="none" stroke="#ec7a4f" stroke-width="0.7"/></svg>
<div class="b" style="left:117.00px;top:321.80px;width:8.20px;height:8.20px;background:#00ae42;border-radius:0.8px;"></div><svg class="b" style="left:118.00px;top:323.00px;" width="6.4" height="6" viewBox="0 0 6.4 6"><path d="M0.9 2.9L2.6 4.6L5.6 1.1" fill="none" stroke="#fff" stroke-width="0.9"/></svg>
<div class="t" style="top:334.50px;height:12px;line-height:12px;font-size:7.3px;color:#2f373a;font-weight:400;letter-spacing:-0.057px;left:12.00px;">Remove small overhangs</div>
<div class="b" style="left:117.00px;top:335.80px;width:8.20px;height:8.20px;background:#00ae42;border-radius:0.8px;"></div><svg class="b" style="left:118.00px;top:337.00px;" width="6.4" height="6" viewBox="0 0 6.4 6"><path d="M0.9 2.9L2.6 4.6L5.6 1.1" fill="none" stroke="#fff" stroke-width="0.9"/></svg>
<div class="b" style="left:12.00px;top:349.20px;width:176.00px;height:0.50px;background:#f1f1f1;"></div>
<svg class="b" style="left:3.00px;top:354.70px;" width="9" height="9" viewBox="0 0 9 9"><rect x="1" y="1" width="7" height="5.6" fill="none" stroke="#4a5154" stroke-width="0.8"/><path d="M0.6 7.8H8.4" stroke="#4a5154" stroke-width="1"/></svg><div class="t" style="top:353.50px;height:12px;line-height:12px;font-size:7.15px;color:#242b2e;font-weight:700;left:13.80px;">Raft</div>
<div class="t" style="top:368.60px;height:12px;line-height:12px;font-size:7.3px;color:#2f373a;font-weight:400;letter-spacing:0.010px;left:12.00px;">Raft layers</div>
<div class="b" style="left:116.20px;top:368.80px;width:57.40px;height:10.40px;background:#fff;border:0.6px solid #f3f3f3;border-radius:1.5px;"></div><svg class="b" style="left:118.60px;top:370.00px;" width="5" height="8" viewBox="0 0 5 8"><path d="M0.8 2.8L2.5 1.1L4.2 2.8M0.8 5.2L2.5 6.9L4.2 5.2" fill="none" stroke="#b4b8ba" stroke-width="0.6"/></svg><div class="t" style="top:368.60px;height:12px;line-height:12px;font-size:7.2px;color:#2f373a;font-weight:400;left:127.00px;">0</div><div class="t" style="top:368.60px;height:12px;line-height:12px;font-size:6.0px;color:#8f9496;font-weight:400;right:828.40px;text-align:right;">layers</div>
<svg class="b" style="left:3.00px;top:388.80px;" width="9" height="9" viewBox="0 0 9 9"><rect x="0.6" y="1.6" width="1.8" height="5.8" rx="0.6" fill="none" stroke="#9aa0a2" stroke-width="0.7"/><rect x="6.4" y="1.6" width="1.8" height="5.8" rx="0.6" fill="none" stroke="#9aa0a2" stroke-width="0.7"/><rect x="2.6" y="1" width="3.6" height="7" fill="#b9bdbf"/></svg><div class="t" style="top:387.60px;height:12px;line-height:12px;font-size:7.15px;color:#242b2e;font-weight:700;left:13.80px;">Filament for Supports</div>
<div class="t" style="top:402.40px;height:12px;line-height:12px;font-size:7.3px;color:#2f373a;font-weight:400;letter-spacing:0.141px;left:12.00px;">Support/raft base</div>
<div class="b" style="left:116.20px;top:402.60px;width:57.40px;height:10.40px;background:#fff;border:0.6px solid #f3f3f3;border-radius:1.5px;"></div><svg class="b" style="left:119.40px;top:405.90px;" width="6" height="4" viewBox="0 0 6 4"><path d="M0.7 0.8 L3 3 L5.3 0.8" fill="none" stroke="#a3a9ab" stroke-width="0.8" stroke-linecap="round"/></svg><div class="t" style="top:402.40px;height:12px;line-height:12px;font-size:7.2px;color:#2f373a;font-weight:400;left:128.20px;">Default</div>
<div class="t" style="top:416.30px;height:12px;line-height:12px;font-size:7.3px;color:#2f373a;font-weight:400;letter-spacing:0.165px;left:12.00px;">Support/raft interface</div>
<div class="b" style="left:116.20px;top:416.50px;width:57.40px;height:10.40px;background:#fff;border:0.6px solid #f3f3f3;border-radius:1.5px;"></div><svg class="b" style="left:119.40px;top:419.80px;" width="6" height="4" viewBox="0 0 6 4"><path d="M0.7 0.8 L3 3 L5.3 0.8" fill="none" stroke="#a3a9ab" stroke-width="0.8" stroke-linecap="round"/></svg><div class="t" style="top:416.30px;height:12px;line-height:12px;font-size:7.2px;color:#2f373a;font-weight:400;left:128.20px;">Default</div>
<svg class="b" style="left:3.00px;top:436.80px;" width="9" height="9" viewBox="0 0 9 9"><circle cx="3.2" cy="3.2" r="2.3" fill="none" stroke="#4a5154" stroke-width="0.7"/><circle cx="3.2" cy="3.2" r="0.8" fill="none" stroke="#4a5154" stroke-width="0.6"/><circle cx="6" cy="6" r="2.1" fill="#fff" stroke="#4a5154" stroke-width="0.7"/><circle cx="6" cy="6" r="0.7" fill="none" stroke="#4a5154" stroke-width="0.6"/></svg><div class="t" style="top:435.60px;height:12px;line-height:12px;font-size:7.15px;color:#242b2e;font-weight:700;left:13.80px;">Advanced</div>
<div class="t" style="top:450.20px;height:12px;line-height:12px;font-size:7.3px;color:#2f373a;font-weight:400;letter-spacing:0.041px;left:12.00px;">Initial layer density</div>
<div class="b" style="left:116.20px;top:450.40px;width:57.40px;height:10.40px;background:#fff;border:0.6px solid #f3f3f3;border-radius:1.5px;"></div><div class="t" style="top:450.20px;height:12px;line-height:12px;font-size:7.2px;color:#2f373a;font-weight:400;left:120.20px;">90</div><div class="t" style="top:450.20px;height:12px;line-height:12px;font-size:6.2px;color:#8f9496;font-weight:400;right:829.60px;text-align:right;">%</div>
<div class="t" style="top:464.10px;height:12px;line-height:12px;font-size:7.3px;color:#2f373a;font-weight:400;letter-spacing:0.013px;left:12.00px;">Initial layer expansion</div>
<div class="b" style="left:116.20px;top:464.30px;width:57.40px;height:10.40px;background:#fff;border:0.6px solid #f3f3f3;border-radius:1.5px;"></div><div class="t" style="top:464.10px;height:12px;line-height:12px;font-size:7.2px;color:#2f373a;font-weight:400;left:120.20px;">-1</div><div class="t" style="top:464.10px;height:12px;line-height:12px;font-size:6.2px;color:#8f9496;font-weight:400;right:829.60px;text-align:right;">mm</div>
<div class="t" style="top:478.00px;height:12px;line-height:12px;font-size:7.3px;color:#2f373a;font-weight:400;letter-spacing:0.075px;left:12.00px;">Support wall loops</div>
<div class="b" style="left:116.20px;top:478.20px;width:57.40px;height:10.40px;background:#fff;border:0.6px solid #f3f3f3;border-radius:1.5px;"></div><svg class="b" style="left:118.60px;top:479.40px;" width="5" height="8" viewBox="0 0 5 8"><path d="M0.8 2.8L2.5 1.1L4.2 2.8M0.8 5.2L2.5 6.9L4.2 5.2" fill="none" stroke="#b4b8ba" stroke-width="0.6"/></svg><div class="t" style="top:478.00px;height:12px;line-height:12px;font-size:7.2px;color:#2f373a;font-weight:400;left:127.00px;">-1</div>
<div class="t" style="top:491.80px;height:12px;line-height:12px;font-size:7.3px;color:#2f373a;font-weight:400;letter-spacing:0.038px;left:12.00px;">Top Z distance</div>
<div class="b" style="left:116.20px;top:492.00px;width:57.40px;height:10.40px;background:#fff;border:0.6px solid #f3f3f3;border-radius:1.5px;"></div><div class="t" style="top:491.80px;height:12px;line-height:12px;font-size:7.2px;color:#2f373a;font-weight:400;left:120.20px;">0.2</div><div class="t" style="top:491.80px;height:12px;line-height:12px;font-size:6.2px;color:#8f9496;font-weight:400;right:829.60px;text-align:right;">mm</div>
<div class="t" style="top:505.70px;height:12px;line-height:12px;font-size:7.3px;color:#2f373a;font-weight:400;letter-spacing:0.069px;left:12.00px;">Bottom Z distance</div>
<div class="b" style="left:116.20px;top:505.90px;width:57.40px;height:10.40px;background:#fff;border:0.6px solid #f3f3f3;border-radius:1.5px;"></div><div class="t" style="top:505.70px;height:12px;line-height:12px;font-size:7.2px;color:#2f373a;font-weight:400;left:120.20px;">0.2</div><div class="t" style="top:505.70px;height:12px;line-height:12px;font-size:6.2px;color:#8f9496;font-weight:400;right:829.60px;text-align:right;">mm</div>
<div class="t" style="top:519.60px;height:12px;line-height:12px;font-size:7.3px;color:#2f373a;font-weight:400;letter-spacing:0.092px;left:12.00px;">Base pattern</div>
<div class="b" style="left:116.20px;top:519.80px;width:57.40px;height:10.40px;background:#fff;border:0.6px solid #f3f3f3;border-radius:1.5px;"></div><svg class="b" style="left:119.40px;top:523.10px;" width="6" height="4" viewBox="0 0 6 4"><path d="M0.7 0.8 L3 3 L5.3 0.8" fill="none" stroke="#a3a9ab" stroke-width="0.8" stroke-linecap="round"/></svg><div class="t" style="top:519.60px;height:12px;line-height:12px;font-size:7.2px;color:#2f373a;font-weight:400;left:128.20px;">Default</div>
<div class="t" style="top:533.60px;height:12px;line-height:12px;font-size:7.3px;color:#2f373a;font-weight:400;letter-spacing:0.021px;left:12.00px;">Base pattern spacing</div>
<div class="b" style="left:116.20px;top:533.80px;width:57.40px;height:10.40px;background:#fff;border:0.6px solid #f3f3f3;border-radius:1.5px;"></div><div class="t" style="top:533.60px;height:12px;line-height:12px;font-size:7.2px;color:#2f373a;font-weight:400;left:120.20px;">2.5</div><div class="t" style="top:533.60px;height:12px;line-height:12px;font-size:6.2px;color:#8f9496;font-weight:400;right:829.60px;text-align:right;">mm</div>
<div class="b" style="left:745.70px;top:32.00px;width:206.00px;height:170.60px;background:#464646;"></div>
<div class="b" style="left:745.70px;top:32.00px;width:206.00px;height:11.80px;background:#3b3b3b;"></div>
<div class="t" style="top:33.20px;height:12px;line-height:12px;font-size:6.0px;color:#f2f2f2;font-weight:700;left:750.40px;">Slicing Result</div>
<svg class="b" style="left:942.60px;top:36.40px;" width="7" height="6" viewBox="0 0 7 6"><path d="M1 2.8L3.5 0.8L6 2.8M1 5L3.5 3L6 5" fill="none" stroke="#d8d8d8" stroke-width="0.7"/></svg>
<div class="t" style="top:45.00px;height:12px;line-height:12px;font-size:6.0px;color:#f2f2f2;font-weight:700;left:750.40px;">Color Scheme</div>
<div class="b" style="left:794.00px;top:47.40px;width:94.60px;height:8.80px;background:#353535;border-radius:1px;"></div>
<svg class="b" style="left:796.00px;top:49.80px;" width="6" height="4" viewBox="0 0 6 4"><path d="M0.8 0.8L3 3L5.2 0.8" fill="none" stroke="#d0d0d0" stroke-width="0.7"/></svg>
<div class="t" style="top:45.90px;height:12px;line-height:12px;font-size:6.0px;color:#e4e4e4;font-weight:400;left:804.60px;">Filament</div>
<div class="t" style="top:56.10px;height:12px;line-height:12px;font-size:6.0px;color:#f2f2f2;font-weight:700;left:750.40px;">Filament</div>
<div class="t" style="top:56.10px;height:12px;line-height:12px;font-size:6.0px;color:#f2f2f2;font-weight:700;left:797.40px;">Model</div>
<div class="t" style="top:56.10px;height:12px;line-height:12px;font-size:6.0px;color:#f2f2f2;font-weight:700;left:848.70px;">Support</div>
<div class="t" style="top:56.10px;height:12px;line-height:12px;font-size:6.0px;color:#f2f2f2;font-weight:700;left:900.10px;">Total</div>
<div class="b" style="left:745.70px;top:66.20px;width:206.00px;height:0.80px;background:#6a6a6a;"></div>
<div class="b" style="left:751.20px;top:69.60px;width:4.20px;height:4.20px;background:#3a3a3a;"></div>
<div class="t" style="top:66.40px;height:12px;line-height:12px;font-size:6.25px;color:#f2f2f2;font-weight:400;left:759.00px;">1</div>
<div class="t" style="top:66.40px;height:12px;line-height:12px;font-size:6.25px;color:#f2f2f2;font-weight:400;left:797.40px;">19.53 m</div>
<div class="t" style="top:73.20px;height:12px;line-height:12px;font-size:6.25px;color:#f2f2f2;font-weight:400;left:797.40px;">59.65 g</div>
<div class="t" style="top:66.40px;height:12px;line-height:12px;font-size:6.25px;color:#f2f2f2;font-weight:400;left:848.70px;">1.75 m</div>
<div class="t" style="top:73.20px;height:12px;line-height:12px;font-size:6.25px;color:#f2f2f2;font-weight:400;left:848.70px;">5.35 g</div>
<div class="t" style="top:66.40px;height:12px;line-height:12px;font-size:6.25px;color:#f2f2f2;font-weight:400;left:900.10px;">21.28 m</div>
<div class="t" style="top:73.20px;height:12px;line-height:12px;font-size:6.25px;color:#f2f2f2;font-weight:400;left:900.10px;">65.00 g</div>
<div class="t" style="top:83.10px;height:12px;line-height:12px;font-size:6.25px;color:#f2f2f2;font-weight:400;left:750.40px;">Filament change times:</div>
<div class="t" style="top:83.10px;height:12px;line-height:12px;font-size:6.25px;color:#f2f2f2;font-weight:400;left:818.00px;">0</div>
<div class="t" style="top:91.90px;height:12px;line-height:12px;font-size:6.25px;color:#f2f2f2;font-weight:400;left:750.40px;">Cost:</div>
<div class="t" style="top:91.90px;height:12px;line-height:12px;font-size:6.25px;color:#f2f2f2;font-weight:400;left:768.20px;">1.95</div>
<div class="t" style="top:103.90px;height:12px;line-height:12px;font-size:6.0px;color:#f2f2f2;font-weight:700;left:750.40px;">Time Estimation</div>
<div class="b" style="left:745.70px;top:114.00px;width:206.00px;height:0.80px;background:#6a6a6a;"></div>
<div class="t" style="top:114.30px;height:12px;line-height:12px;font-size:6.25px;color:#f2f2f2;font-weight:400;left:750.40px;">Prepare time:</div>
<div class="t" style="top:114.30px;height:12px;line-height:12px;font-size:6.25px;color:#f2f2f2;font-weight:400;left:808.80px;">7m22s</div>
<div class="t" style="top:122.90px;height:12px;line-height:12px;font-size:6.25px;color:#f2f2f2;font-weight:400;left:750.40px;">Model printing time:</div>
<div class="t" style="top:122.90px;height:12px;line-height:12px;font-size:6.25px;color:#f2f2f2;font-weight:400;left:808.80px;">2h2m</div>
<div class="t" style="top:131.40px;height:12px;line-height:12px;font-size:6.25px;color:#f2f2f2;font-weight:400;left:750.40px;">Total time:</div>
<div class="t" style="top:131.40px;height:12px;line-height:12px;font-size:6.25px;color:#f2f2f2;font-weight:400;left:808.80px;">2h9m</div>
<div class="t" style="top:141.90px;height:12px;line-height:12px;font-size:6.0px;color:#f2f2f2;font-weight:700;left:750.40px;">Options</div>
<div class="t" style="top:141.90px;height:12px;line-height:12px;font-size:6.0px;color:#f2f2f2;font-weight:700;left:848.70px;">Display</div>
<div class="b" style="left:745.70px;top:152.00px;width:206.00px;height:0.80px;background:#6a6a6a;"></div>
<div class="b" style="left:750.40px;top:155.30px;width:4.80px;height:4.80px;background:#3c4a94;"></div>
<div class="t" style="top:152.00px;height:12px;line-height:12px;font-size:6.25px;color:#f2f2f2;font-weight:400;left:758.80px;">Travel</div>
<div class="b" style="left:850.60px;top:154.50px;width:6.80px;height:6.80px;background:#595959;"></div>
<div class="b" style="left:750.40px;top:164.90px;width:4.80px;height:4.80px;background:#c73ac7;"></div>
<div class="t" style="top:161.60px;height:12px;line-height:12px;font-size:6.25px;color:#f2f2f2;font-weight:400;left:758.80px;">Retract</div>
<div class="b" style="left:850.60px;top:164.10px;width:6.80px;height:6.80px;background:#595959;"></div>
<div class="b" style="left:750.40px;top:174.60px;width:4.80px;height:4.80px;background:#3ba3c4;"></div>
<div class="t" style="top:171.30px;height:12px;line-height:12px;font-size:6.25px;color:#f2f2f2;font-weight:400;left:758.80px;">Unretract</div>
<div class="b" style="left:850.60px;top:173.80px;width:6.80px;height:6.80px;background:#595959;"></div>
<div class="b" style="left:750.40px;top:184.00px;width:4.80px;height:4.80px;background:#f3f30a;"></div>
<div class="t" style="top:180.70px;height:12px;line-height:12px;font-size:6.25px;color:#f2f2f2;font-weight:400;left:758.80px;">Wipe</div>
<div class="b" style="left:850.60px;top:183.20px;width:6.80px;height:6.80px;background:#595959;"></div>
<div class="b" style="left:750.40px;top:193.40px;width:4.80px;height:4.80px;background:#f5f5f5;"></div>
<div class="t" style="top:190.10px;height:12px;line-height:12px;font-size:6.25px;color:#f2f2f2;font-weight:400;left:758.80px;">Seams</div>
<div class="b" style="left:850.60px;top:192.60px;width:6.80px;height:6.80px;background:#595959;"></div>
<svg class="b" style="left:850.60px;top:192.60px;" width="6.8" height="6.8" viewBox="0 0 6.8 6.8"><path d="M1.4 3.6L2.9 5.2L5.6 1.4" fill="none" stroke="#1eb356" stroke-width="0.9"/></svg>
</body></html>
